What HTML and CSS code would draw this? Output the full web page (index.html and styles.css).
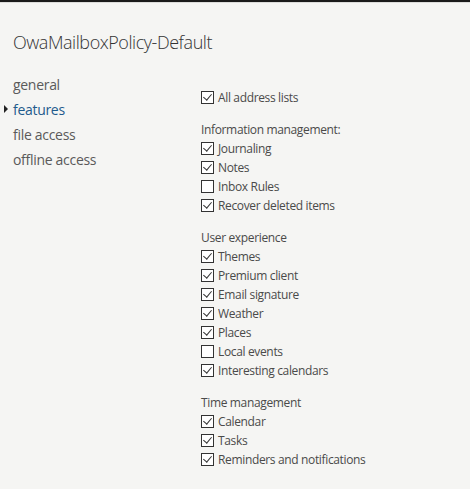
FILE: index.html
```html
<!DOCTYPE html>
<html lang="en">
<head>
  <meta charset="UTF-8">
  <title>OwaMailboxPolicy-Default</title>
  <link rel="stylesheet" href="styles.css">
</head>
<body>
  <div class="topbar"></div>
  <div class="page">
    <h1 class="title">OwaMailboxPolicy-Default</h1>
    <div class="layout">
      <!-- Left navigation -->
      <ul class="nav">
        <li>general</li>
        <li class="active">features</li>
        <li>file access</li>
        <li>offline access</li>
      </ul>

      <!-- Feature list -->
      <div class="features">
        <div class="group">
          <label class="item"><span class="box checked"></span>All address lists</label>
        </div>

        <div class="group">
          <div class="group-title">Information management:</div>
          <label class="item"><span class="box checked"></span>Journaling</label>
          <label class="item"><span class="box checked"></span>Notes</label>
          <label class="item"><span class="box"></span>Inbox Rules</label>
          <label class="item"><span class="box checked"></span>Recover deleted items</label>
        </div>

        <div class="group">
          <div class="group-title">User experience</div>
          <label class="item"><span class="box checked"></span>Themes</label>
          <label class="item"><span class="box checked"></span>Premium client</label>
          <label class="item"><span class="box checked"></span>Email signature</label>
          <label class="item"><span class="box checked"></span>Weather</label>
          <label class="item"><span class="box checked"></span>Places</label>
          <label class="item"><span class="box"></span>Local events</label>
          <label class="item"><span class="box checked"></span>Interesting calendars</label>
        </div>

        <div class="group">
          <div class="group-title">Time management</div>
          <label class="item"><span class="box checked"></span>Calendar</label>
          <label class="item"><span class="box checked"></span>Tasks</label>
          <label class="item"><span class="box checked"></span>Reminders and notifications</label>
        </div>
      </div>
    </div>
  </div>
</body>
</html>
```

FILE: styles.css
```css
/* General styles */
body {
  margin: 0;
  font-family: "Open Sans", "Noto Sans", sans-serif;
  background-color: #f5f5f3;
  color: #444;
}

.topbar {
  height: 2px;
  background-color: #1a1a1a;
  border-bottom: 1px solid #dcdcda;
}

.page {
  padding: 0 0 0 13px;
}

.title {
  margin: 0;
  padding-top: 27px;
  font-size: 18px;
  font-weight: 300;
  color: #333;
  line-height: 24px;
  letter-spacing: -0.45px;
}

.layout {
  display: flex;
  margin-top: 18px;
}

/* Left navigation */
.nav {
  list-style: none;
  margin: 0;
  padding: 0;
  width: 188px;
}

.nav li {
  position: relative;
  font-size: 14px;
  line-height: 25px;
  letter-spacing: -0.3px;
  color: #5a5a5a;
}

.nav li.active {
  color: #1e5b8c;
}

.nav li.active::before {
  content: "";
  position: absolute;
  left: -9px;
  top: 8px;
  border-left: 4px solid #222;
  border-top: 4px solid transparent;
  border-bottom: 4px solid transparent;
}

/* Feature list */
.features {
  padding-top: 16px;
}

.group {
  margin-bottom: 13px;
}

.group-title,
.item {
  display: flex;
  align-items: center;
  height: 19px;
  font-size: 12px;
  letter-spacing: -0.35px;
  color: #4a4a4a;
}

.box {
  position: relative;
  box-sizing: border-box;
  width: 13px;
  height: 13px;
  border: 1px solid #333;
  margin-right: 4px;
  background-color: #fff;
}

.box.checked::after {
  content: "";
  position: absolute;
  left: 3px;
  top: 0px;
  width: 4px;
  height: 7px;
  border-right: 1.3px solid #333;
  border-bottom: 1.3px solid #333;
  transform: rotate(40deg);
}
```
